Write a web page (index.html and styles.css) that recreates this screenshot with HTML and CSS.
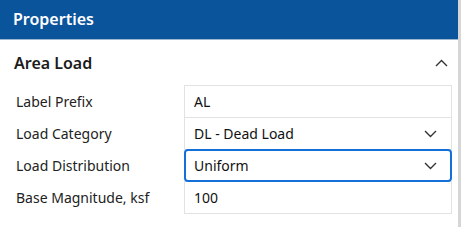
FILE: index.html
```html
<!DOCTYPE html>
<html lang="en">
<head>
    <meta charset="UTF-8">
    <title>Properties</title>
    <link rel="stylesheet" href="styles.css">
</head>
<body>
    <div class="panel">
        <div class="panel-title">Properties</div>

        <div class="section">
            <div class="section-head">
                <span>Area Load</span>
                <svg class="chev-up" width="13" height="8" viewBox="0 0 13 8">
                    <path d="M1 7 L6.5 1.5 L12 7" fill="none" stroke="#333" stroke-width="1.4"/>
                </svg>
            </div>

            <div class="row">
                <div class="label">Label Prefix</div>
                <div class="field">AL</div>
            </div>
            <div class="row">
                <div class="label">Load Category</div>
                <div class="field select">
                    <span>DL - Dead Load</span>
                    <svg width="13" height="8" viewBox="0 0 13 8">
                        <path d="M1 1 L6.5 6.5 L12 1" fill="none" stroke="#333" stroke-width="1.4"/>
                    </svg>
                </div>
            </div>
            <div class="row">
                <div class="label">Load Distribution</div>
                <div class="field select focused">
                    <span>Uniform</span>
                    <svg width="13" height="8" viewBox="0 0 13 8">
                        <path d="M1 1 L6.5 6.5 L12 1" fill="none" stroke="#333" stroke-width="1.4"/>
                    </svg>
                </div>
            </div>
            <div class="row">
                <div class="label">Base Magnitude, ksf</div>
                <div class="field">100</div>
            </div>
        </div>
    </div>
</body>
</html>
```

FILE: styles.css
```css
body {
    margin: 0;
    font-family: "Noto Sans", "Open Sans", sans-serif;
    background-color: #ffffff;
}

.panel {
    width: 461px;
    height: 227px;
    box-sizing: border-box;
    border-right: 3px solid #d6d6d6;
    background-color: #ffffff;
}

.panel-title {
    height: 39px;
    line-height: 39px;
    padding-left: 13px;
    background-color: #0a549c;
    border-bottom: 1px solid #9db6cf;
    color: #ffffff;
    font-size: 16px;
    font-weight: 600;
}

.section {
    padding-right: 6px;
}

.section-head {
    height: 45px;
    display: flex;
    align-items: center;
    justify-content: space-between;
    padding-left: 14px;
    padding-right: 4px;
    font-size: 16px;
    font-weight: 600;
    color: #1c1c1c;
}

.row {
    height: 32px;
    display: flex;
    align-items: flex-start;
}

.label {
    width: 184px;
    padding-left: 16px;
    box-sizing: border-box;
    line-height: 33px;
    font-size: 14px;
    color: #222222;
}

.field {
    flex: 1;
    height: 33px;
    box-sizing: border-box;
    border: 1px solid #e2e2e2;
    padding-left: 9px;
    line-height: 31px;
    font-size: 14px;
    color: #111111;
    background-color: #ffffff;
}

.select {
    display: flex;
    align-items: center;
    justify-content: space-between;
    padding-right: 14px;
}

.focused {
    position: relative;
    border: 2px solid #1470d8;
    border-radius: 4px;
    padding-left: 8px;
    padding-right: 13px;
}
```
